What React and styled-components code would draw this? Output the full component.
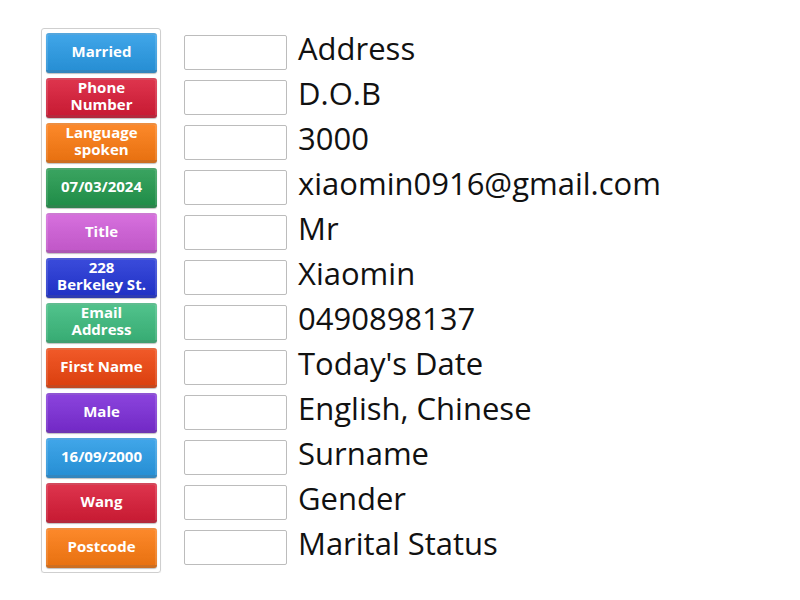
import React from "react";
import styled, { createGlobalStyle } from "styled-components";

const GlobalStyle = createGlobalStyle`
  body {
    margin: 0;
    background: #fff;
    font-family: "Open Sans", "Noto Sans", sans-serif;
  }
`

const Page = styled.div`
  display: flex;
  align-items: flex-start;
  padding: 28px 0 0 41px;
`

const Tray = styled.div`
  display: flex;
  flex-direction: column;
  gap: 5px;
  padding: 4px 3px 4px 4px;
  border: 1px solid #cfcfcf;
  border-radius: 3px;
  box-shadow: 0 1px 1px rgba(0, 0, 0, 0.08);
`

const Tile = styled.div`
  box-sizing: border-box;
  width: 111px;
  height: 40px;
  padding-bottom: 3px;
  display: flex;
  align-items: center;
  justify-content: center;
  text-align: center;
  color: #fff;
  font-weight: 700;
  font-size: 15px;
  line-height: 17px;
  border-radius: 3px;
  background: linear-gradient(to bottom, rgba(255, 255, 255, 0.1), rgba(0, 0, 0, 0.08)),
    ${({ color }) => color};
  border-top: 2px solid rgba(255, 255, 255, 0.2);
  border-bottom: 3px solid rgba(0, 0, 0, 0.18);
  box-shadow: inset 2px 0 0 rgba(255, 255, 255, 0.12), inset -2px 0 0 rgba(255, 255, 255, 0.12),
    0 1px 1px rgba(0, 0, 0, 0.25);
`

const Targets = styled.div`
  display: flex;
  flex-direction: column;
  margin-left: 23px;
  padding-top: 2px;
`

const Row = styled.div`
  display: flex;
  align-items: center;
  height: 45px;
`

const Slot = styled.div`
  box-sizing: border-box;
  width: 103px;
  height: 35px;
  border: 1px solid #bcbcbc;
  border-radius: 2px;
  background: #fff;
`

const Label = styled.span`
  margin-left: 11px;
  font-size: 31px;
  color: #111;
  line-height: 1;
  position: relative;
  top: -4px;
`

const tiles = [
  { text: "Married", color: "#2a9be6" },
  { text: "Phone\nNumber", color: "#d91d38" },
  { text: "Language\nspoken", color: "#fc7b12" },
  { text: "07/03/2024", color: "#23994e" },
  { text: "Title", color: "#d15fd9" },
  { text: "228\nBerkeley St.", color: "#2336d6" },
  { text: "Email\nAddress", color: "#3dbb7e" },
  { text: "First Name", color: "#ee4610" },
  { text: "Male", color: "#7d2ed8" },
  { text: "16/09/2000", color: "#2a9be6" },
  { text: "Wang", color: "#d91d38" },
  { text: "Postcode", color: "#fc7b12" },
]

const labels = [
  "Address",
  "D.O.B",
  "3000",
  "xiaomin0916@gmail.com",
  "Mr",
  "Xiaomin",
  "0490898137",
  "Today's Date",
  "English, Chinese",
  "Surname",
  "Gender",
  "Marital Status",
]

const App = () => {
  return (
    <>
      <GlobalStyle />
      <Page>
        <Tray>
          {tiles.map((t) => (
            <Tile key={t.text} color={t.color}>
              <span>
                {t.text.split("\n").map((line, i) => (
                  <React.Fragment key={i}>
                    {i > 0 && <br />}
                    {line}
                  </React.Fragment>
                ))}
              </span>
            </Tile>
          ))}
        </Tray>
        <Targets>
          {labels.map((l) => (
            <Row key={l}>
              <Slot />
              <Label>{l}</Label>
            </Row>
          ))}
        </Targets>
      </Page>
    </>
  )
}

export default App
